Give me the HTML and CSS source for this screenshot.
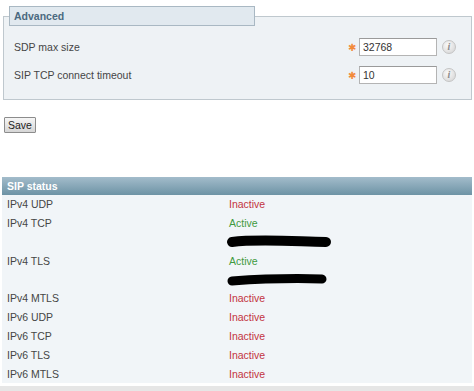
FILE: index.html
```html
<!DOCTYPE html>
<html lang="en">
<head>
    <meta charset="UTF-8">
    <title>SIP Settings</title>
    <link rel="stylesheet" href="styles.css">
</head>
<body>
    <fieldset class="settings-box">
        <legend class="settings-legend">Advanced</legend>
        <div class="setting-row">
            <label class="setting-label" for="sdpMax">SDP max size</label>
            <span class="required">&#10033;</span>
            <input class="setting-input" id="sdpMax" type="text" value="32768">
            <span class="info-icon">i</span>
        </div>
        <div class="setting-row">
            <label class="setting-label" for="tcpTimeout">SIP TCP connect timeout</label>
            <span class="required">&#10033;</span>
            <input class="setting-input" id="tcpTimeout" type="text" value="10">
            <span class="info-icon">i</span>
        </div>
    </fieldset>

    <div class="save-bar">
        <button class="save-btn">Save</button>
    </div>

    <div class="status-panel">
        <div class="status-header">SIP status</div>
        <div class="status-rows">
            <div class="status-row"><span class="status-name">IPv4 UDP</span><span class="state inactive">Inactive</span></div>
            <div class="status-row"><span class="status-name">IPv4 TCP</span><span class="state active">Active</span></div>
            <div class="status-row">
                <span class="status-name"></span>
                <svg class="redacted" width="106" height="14" viewBox="0 0 106 14">
                    <path d="M6 7 C 30 4, 60 6, 100 7" stroke="#000" stroke-width="10" stroke-linecap="round" fill="none"/>
                </svg>
            </div>
            <div class="status-row"><span class="status-name">IPv4 TLS</span><span class="state active">Active</span></div>
            <div class="status-row">
                <span class="status-name"></span>
                <svg class="redacted" width="102" height="14" viewBox="0 0 102 14">
                    <path d="M6 8 C 35 6, 65 5, 96 6" stroke="#000" stroke-width="9" stroke-linecap="round" fill="none"/>
                </svg>
            </div>
            <div class="status-row"><span class="status-name">IPv4 MTLS</span><span class="state inactive">Inactive</span></div>
            <div class="status-row"><span class="status-name">IPv6 UDP</span><span class="state inactive">Inactive</span></div>
            <div class="status-row"><span class="status-name">IPv6 TCP</span><span class="state inactive">Inactive</span></div>
            <div class="status-row"><span class="status-name">IPv6 TLS</span><span class="state inactive">Inactive</span></div>
            <div class="status-row"><span class="status-name">IPv6 MTLS</span><span class="state inactive">Inactive</span></div>
        </div>
    </div>

    <div class="footer-band"></div>
</body>
</html>
```

FILE: styles.css
```css
* {
    box-sizing: border-box;
}

body {
    margin: 0;
    font-family: "Liberation Sans", Arial, sans-serif;
    font-size: 10.5px;
    color: #454545;
    background: #fff;
}

.settings-box {
    margin: 6px 2px 0 3px;
    padding: 7px 0 10px 0;
    border: 1px solid #bfc8ce;
    background: #eef2f5;
    min-width: 0;
}

.settings-legend {
    margin-left: 5px;
    width: 246px;
    height: 20px;
    padding: 0 0 0 4px;
    line-height: 18px;
    border: 1px solid #a9b8c3;
    background: #e1e9ef;
    color: #4b6a80;
    font-weight: bold;
}

.setting-row {
    display: flex;
    align-items: center;
    height: 28px;
    padding-left: 10px;
}

.setting-label {
    flex: 1;
}

.required {
    color: #f28a3a;
    font-family: "DejaVu Sans", sans-serif;
    font-size: 10px;
    width: 11px;
}

.setting-input {
    width: 78px;
    height: 18px;
    margin: 0;
    padding: 0 3px;
    border: 1px solid #b4b4b4;
    border-top-color: #9a9a9a;
    font-family: "Liberation Sans", Arial, sans-serif;
    font-size: 10.5px;
    color: #333;
    background: #fff;
}

.info-icon {
    width: 14px;
    height: 14px;
    margin: 0 15px 0 5px;
    border-radius: 50%;
    border: 1px solid #c4c4c4;
    background: radial-gradient(circle at 40% 35%, #fafafa, #d2d2d2);
    color: #8a8a8a;
    font-family: "Liberation Serif", serif;
    font-style: italic;
    font-weight: bold;
    font-size: 10px;
    line-height: 12px;
    text-align: center;
}

.save-bar {
    padding: 17px 0 0 4px;
}

.save-btn {
    height: 16px;
    padding: 0 3px;
    border: 1px solid #8c8c8c;
    border-radius: 1px;
    background: linear-gradient(#f6f6f6, #d6d6d6);
    font-family: "Liberation Sans", Arial, sans-serif;
    font-size: 10.5px;
    color: #222;
    line-height: 14px;
}

.status-panel {
    margin: 44px 2px 0 2px;
}

.status-header {
    height: 18px;
    padding-left: 5px;
    line-height: 18px;
    background: linear-gradient(#a3bccb, #6d93a5);
    color: #fff;
    font-weight: bold;
}

.status-rows {
    background: #f1f5f8;
}

.status-row {
    display: flex;
    align-items: center;
    height: 18.8px;
    padding-left: 5px;
}

.status-name {
    width: 222px;
}

.state.inactive {
    color: #c33340;
}

.state.active {
    color: #3f9a3f;
}

.redacted {
    margin-left: -3px;
}

.footer-band {
    margin-top: 3px;
    height: 6px;
    background: #e6e6e6;
}
```
